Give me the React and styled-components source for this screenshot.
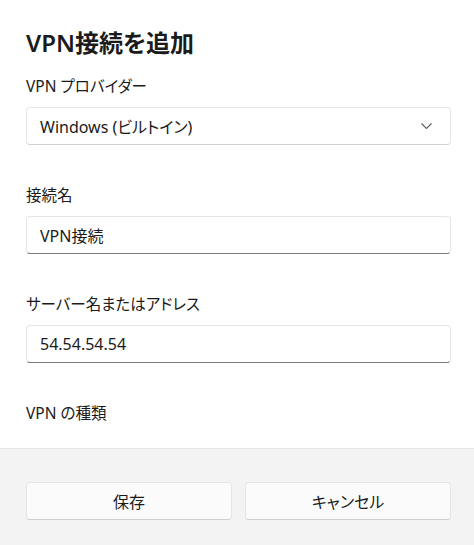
import React from 'react';
import styled, { createGlobalStyle } from 'styled-components';

const GlobalStyle = createGlobalStyle`
  html, body {
    margin: 0;
    padding: 0;
    background: #ffffff;
  }
  body {
    font-family: 'Noto Sans', 'Noto Sans CJK JP', sans-serif;
    font-feature-settings: 'palt';
    color: #1b1b1b;
  }
`;

const Dialog = styled.div`
  display: flex;
  flex-direction: column;
  width: 474px;
  height: 545px;
  overflow: hidden;
  background: #ffffff;
`;

const Body = styled.div`
  flex: 1;
  overflow: hidden;
  padding: 27px 23px 0 26px;
`;

const Title = styled.h1`
  margin: 0 0 17px;
  font-size: 24px;
  line-height: 32px;
  font-weight: 600;
  color: #1b1b1b;
`;

const Field = styled.div`
  display: flex;
  flex-direction: column;
  margin-bottom: 40px;
`;

const Label = styled.div`
  font-size: 15.5px;
  line-height: 20px;
  margin-bottom: 11px;
  color: #1b1b1b;
`;

const Box = styled.div`
  display: flex;
  align-items: center;
  justify-content: space-between;
  height: 38px;
  box-sizing: border-box;
  padding: 0 18px 0 13px;
  background: #ffffff;
  border: 1px solid #e6e6e6;
  border-bottom-color: ${(p) => (p.$input ? '#7a7a7a' : '#d2d2d2')};
  border-radius: 4px;
  font-size: 16px;
  color: #1b1b1b;
`;

const Chevron = styled.svg`
  width: 11px;
  height: 6px;
  color: #5f5f5f;
`;

const Footer = styled.div`
  display: grid;
  grid-template-columns: 1fr 1fr;
  gap: 13px;
  padding: 33px 23px 25px 26px;
  background: #f3f3f3;
  border-top: 1px solid #e5e5e5;
`;

const Button = styled.button`
  height: 38px;
  box-sizing: border-box;
  background: #fbfbfb;
  border: 1px solid #e5e5e5;
  border-bottom-color: #cfcfcf;
  border-radius: 4px;
  font-family: inherit;
  font-feature-settings: 'palt';
  font-size: 16px;
  color: #1b1b1b;
`;

export default function App() {
  return (
    <Dialog>
      <GlobalStyle />
      <Body>
        <Title>VPN接続を追加</Title>
        <Field>
          <Label>VPN プロバイダー</Label>
          <Box>
            Windows (ビルトイン)
            <Chevron viewBox="0 0 11 6" fill="none">
              <path d="M0.5 0.5 L5.5 5.5 L10.5 0.5" stroke="currentColor" strokeWidth="1.1" />
            </Chevron>
          </Box>
        </Field>
        <Field>
          <Label>接続名</Label>
          <Box $input>VPN接続</Box>
        </Field>
        <Field>
          <Label>サーバー名またはアドレス</Label>
          <Box $input>54.54.54.54</Box>
        </Field>
        <Field>
          <Label>VPN の種類</Label>
        </Field>
      </Body>
      <Footer>
        <Button>保存</Button>
        <Button>キャンセル</Button>
      </Footer>
    </Dialog>
  );
}
